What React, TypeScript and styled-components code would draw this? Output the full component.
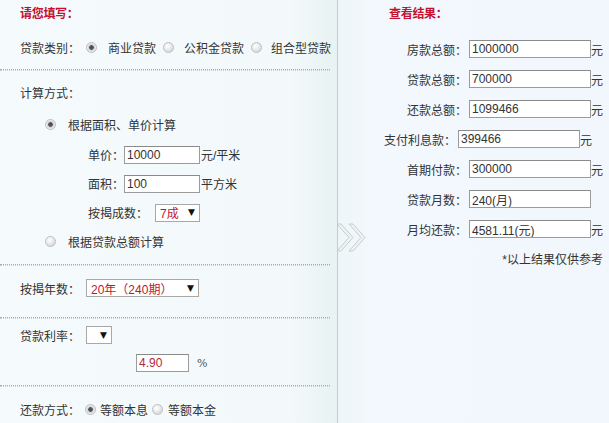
import React from 'react';
import styled, { createGlobalStyle } from 'styled-components';

const GlobalStyle = createGlobalStyle`
  html, body {
    margin: 0;
    padding: 0;
    background: #f2f8fb;
  }
  #root {
    width: 609px;
    height: 423px;
    overflow: hidden;
  }
`;

const FONT = `"Liberation Sans", "Noto Sans CJK SC", sans-serif`;

const SPage = styled.div`
  position: relative;
  display: grid;
  grid-template-columns: 338px 1fr;
  width: 609px;
  height: 423px;
  font-family: ${FONT};
  font-size: 12px;
  color: #333;
  background: #f1f7fb;
`;

const SLeftPanel = styled.div`
  display: flex;
  flex-direction: column;
  background: linear-gradient(to right, #f5fafc 0%, #f3f9fb 86%, #e7f2f2 100%);
  border-right: 1px solid #b6d1d0;
`;

const SRightPanel = styled.div`
  display: flex;
  flex-direction: column;
  background: linear-gradient(to right, #eef6f8 0%, #f2f8fc 12%, #f1f7fc 100%);
`;

interface TitleProps {
  $indent: number;
}

const STitle = styled.div<TitleProps>`
  height: 24px;
  display: flex;
  align-items: center;
  padding-left: ${(p) => p.$indent}px;
  color: #c3112e;
  font-weight: bold;
  letter-spacing: -0.3px;
`;

interface SectionProps {
  $pt: number;
  $pb: number;
}

const SSection = styled.div<SectionProps>`
  display: flex;
  flex-direction: column;
  padding-top: ${(p) => p.$pt}px;
  padding-bottom: ${(p) => p.$pb}px;
`;

const SDivider = styled.div`
  height: 0;
  margin-right: 7px;
  border-top: 1px dotted #a4acaf;
  border-bottom: 1px dotted #cdd3d5;
`;

interface RowProps {
  $h: number;
  $indent: number;
}

const SRow = styled.div<RowProps>`
  display: flex;
  align-items: center;
  height: ${(p) => p.$h}px;
  padding-left: ${(p) => p.$indent}px;
  white-space: nowrap;
`;

interface OptionProps {
  $gap: number;
  $before: number;
}

const SOption = styled.span<OptionProps>`
  display: inline-flex;
  align-items: center;
  gap: ${(p) => p.$gap}px;
  margin-left: ${(p) => p.$before}px;
`;

interface RadioProps {
  $checked?: boolean;
}

const SRadio = styled.span<RadioProps>`
  display: inline-block;
  width: 9px;
  height: 9px;
  border-radius: 50%;
  border: 1px solid #b9bdbf;
  background: ${(p) =>
    p.$checked
      ? 'radial-gradient(circle, #4a4a4a 0, #5a5a5a 2px, #cfcfcf 2.6px, #f4f4f4 5px)'
      : 'radial-gradient(circle at 40% 35%, #ffffff 0, #eeeeee 3px, #d2d4d5 6px)'};
  box-shadow: inset 0 0 1px #ffffff;
`;

interface BoxProps {
  $w: number;
  $red?: boolean;
}

const SInput = styled.input<BoxProps>`
  box-sizing: border-box;
  width: ${(p) => p.$w}px;
  height: 18px;
  margin: 0;
  padding: 0 2px;
  border: 1px solid #9b9b9b;
  border-top-color: #8a8a8a;
  background: #fff;
  font-family: ${FONT};
  font-size: 12px;
  color: ${(p) => (p.$red ? '#b1283a' : '#333')};
  outline: none;
`;

interface SelectProps {
  $w: number;
  $before: number;
}

const SSelect = styled.div<SelectProps>`
  box-sizing: border-box;
  display: inline-flex;
  align-items: center;
  justify-content: space-between;
  width: ${(p) => p.$w}px;
  height: 18px;
  margin-left: ${(p) => p.$before}px;
  padding: 0 4px 0 4px;
  border: 1px solid #a8a8a8;
  background: #fff;
  color: #c0162d;
`;

const SCaret = styled.span`
  font-family: "DejaVu Sans", sans-serif;
  font-size: 9px;
  color: #111;
  line-height: 1;
`;

const SUnit = styled.span`
  margin-left: 1px;
`;

const SPercent = styled.span`
  margin-left: 8px;
  color: #555;
  font-family: "DejaVu Serif", serif;
  font-size: 11px;
`;

interface ResultRowProps {
  $shift?: number;
}

const SResultRow = styled.div<ResultRowProps>`
  display: flex;
  align-items: center;
  height: 30px;
  padding-left: ${(p) => 49 - (p.$shift ?? 0)}px;
  white-space: nowrap;
`;

const SResultLabel = styled.span`
  display: inline-block;
  width: 80px;
  text-align: right;
  direction: rtl;
  margin-right: 2px;
`;

const SResultLabelText = styled.span`
  direction: ltr;
  unicode-bidi: isolate;
`;

const SResults = styled.div`
  display: flex;
  flex-direction: column;
  margin-top: 10px;
`;

const SNote = styled.div`
  height: 28px;
  display: flex;
  align-items: center;
  justify-content: flex-end;
  padding-right: 6px;
`;

const SArrow = styled.svg`
  position: absolute;
  left: 336px;
  top: 222px;
`;

const Radio: React.FC<{ checked?: boolean; gap: number; before: number; label: string }> = ({
  checked,
  gap,
  before,
  label,
}) => (
  <SOption $gap={gap} $before={before}>
    <SRadio $checked={checked} />
    <span>{label}</span>
  </SOption>
);

const Select: React.FC<{ value?: string; width: number; before: number }> = ({
  value,
  width,
  before,
}) => (
  <SSelect $w={width} $before={before}>
    <span>{value ?? ''}</span>
    <SCaret>▼</SCaret>
  </SSelect>
);

interface ResultItem {
  label: string;
  value: string;
  unit?: boolean;
  shift?: number;
}

const results: ResultItem[] = [
  { label: '房款总额：', value: '1000000', unit: true },
  { label: '贷款总额：', value: '700000', unit: true },
  { label: '还款总额：', value: '1099466', unit: true },
  { label: '支付利息款：', value: '399466', unit: true, shift: 11 },
  { label: '首期付款：', value: '300000', unit: true },
  { label: '贷款月数：', value: '240(月)' },
  { label: '月均还款：', value: '4581.11(元)', unit: true },
];

const FillForm: React.FC = () => (
  <SLeftPanel>
    <SSection $pt={0} $pb={9}>
      <STitle $indent={20}>请您填写：</STitle>
      <SRow $h={26} $indent={20} style={{ marginTop: 10 }}>
        <span>贷款类别：</span>
        <Radio checked gap={11} before={6} label="商业贷款" />
        <Radio gap={10} before={7} label="公积金贷款" />
        <Radio gap={9} before={7} label="组合型贷款" />
      </SRow>
    </SSection>
    <SDivider />
    <SSection $pt={5} $pb={8}>
      <SRow $h={32} $indent={20}>
        <span>计算方式：</span>
      </SRow>
      <SRow $h={32} $indent={45}>
        <Radio checked gap={12} before={0} label="根据面积、单价计算" />
      </SRow>
      <SRow $h={29} $indent={88}>
        <span>单价：</span>
        <SInput $w={76} value="10000" readOnly />
        <SUnit>元/平米</SUnit>
      </SRow>
      <SRow $h={29} $indent={88}>
        <span>面积：</span>
        <SInput $w={76} value="100" readOnly />
        <SUnit>平方米</SUnit>
      </SRow>
      <SRow $h={29} $indent={88}>
        <span>按揭成数：</span>
        <Select value="7成" width={45} before={7} />
      </SRow>
      <SRow $h={29} $indent={45}>
        <Radio gap={12} before={0} label="根据贷款总额计算" />
      </SRow>
    </SSection>
    <SDivider />
    <SSection $pt={7} $pb={14}>
      <SRow $h={30} $indent={20}>
        <span>按揭年数：</span>
        <Select value="20年（240期）" width={113} before={6} />
      </SRow>
    </SSection>
    <SDivider />
    <SSection $pt={3} $pb={9}>
      <SRow $h={26} $indent={20}>
        <span>贷款利率：</span>
        <Select width={26} before={6} />
      </SRow>
      <SRow $h={26} $indent={136} style={{ marginTop: 2 }}>
        <SInput $w={53} $red value="4.90" readOnly />
        <SPercent>%</SPercent>
      </SRow>
    </SSection>
    <SDivider />
    <SSection $pt={9} $pb={0}>
      <SRow $h={26} $indent={20}>
        <span>还款方式：</span>
        <Radio checked gap={4} before={5} label="等额本息" />
        <Radio gap={5} before={4} label="等额本金" />
      </SRow>
    </SSection>
  </SLeftPanel>
);

const ResultPanel: React.FC = () => (
  <SRightPanel>
    <STitle $indent={51}>查看结果：</STitle>
    <SResults>
      {results.map((item) => (
        <SResultRow key={item.label} $shift={item.shift}>
          <SResultLabel>
            <SResultLabelText>{item.label}</SResultLabelText>
          </SResultLabel>
          <SInput $w={122} value={item.value} readOnly />
          {item.unit ? <span>元</span> : null}
        </SResultRow>
      ))}
      <SNote>*以上结果仅供参考</SNote>
    </SResults>
  </SRightPanel>
);

const App: React.FC = () => (
  <>
    <GlobalStyle />
    <SPage>
      <FillForm />
      <ResultPanel />
      <SArrow width="30" height="32" viewBox="0 0 30 32">
        <path d="M1 2 L5 2 L17 15.5 L5 29 L1 29 L13 15.5 Z" fill="#eef3f3" stroke="#c7cdcd" strokeWidth="1" />
        <path d="M13 2 L17 2 L29 15.5 L17 29 L13 29 L25 15.5 Z" fill="#eef3f3" stroke="#c7cdcd" strokeWidth="1" />
      </SArrow>
    </SPage>
  </>
);

export default App;
